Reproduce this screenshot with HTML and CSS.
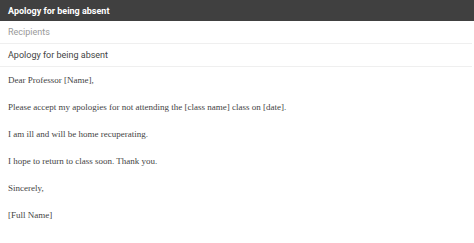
FILE: index.html
```html
<!DOCTYPE html>
<html lang="en">
<head>
  <meta charset="UTF-8">
  <title>Apology for being absent</title>
  <link rel="stylesheet" href="styles.css">
</head>
<body>
  <header class="title-bar">
    <h1>Apology for being absent</h1>
  </header>
  <div class="field recipients">Recipients</div>
  <div class="field subject">Apology for being absent</div>
  <div class="message">
    <p>Dear Professor [Name],</p>
    <p>Please accept my apologies for not attending the [class name] class on [date].</p>
    <p>I am ill and will be home recuperating.</p>
    <p>I hope to return to class soon. Thank you.</p>
    <p>Sincerely,</p>
    <p>[Full Name]</p>
  </div>
</body>
</html>
```

FILE: styles.css
```css
body {
  margin: 0;
  padding: 0;
  font-family: Roboto, "Liberation Sans", sans-serif;
  background-color: #fff;
}

.title-bar {
  background-color: #404040;
  height: 21px;
  padding: 0 8px;
  display: flex;
  align-items: center;
}

.title-bar h1 {
  margin: 0;
  font-size: 9px;
  font-weight: bold;
  color: #fff;
}

.field {
  height: 22px;
  margin-right: 2px;
  padding: 0 8px;
  display: flex;
  align-items: center;
  font-size: 9px;
  border-bottom: 1px solid #efefef;
}

.recipients {
  color: #999;
}

.subject {
  color: #444;
}

.message {
  padding: 0 8px;
  font-family: "Liberation Serif", serif;
  font-size: 9px;
  color: #444;
}

.message p {
  margin: 0;
  line-height: 27px;
}
```
